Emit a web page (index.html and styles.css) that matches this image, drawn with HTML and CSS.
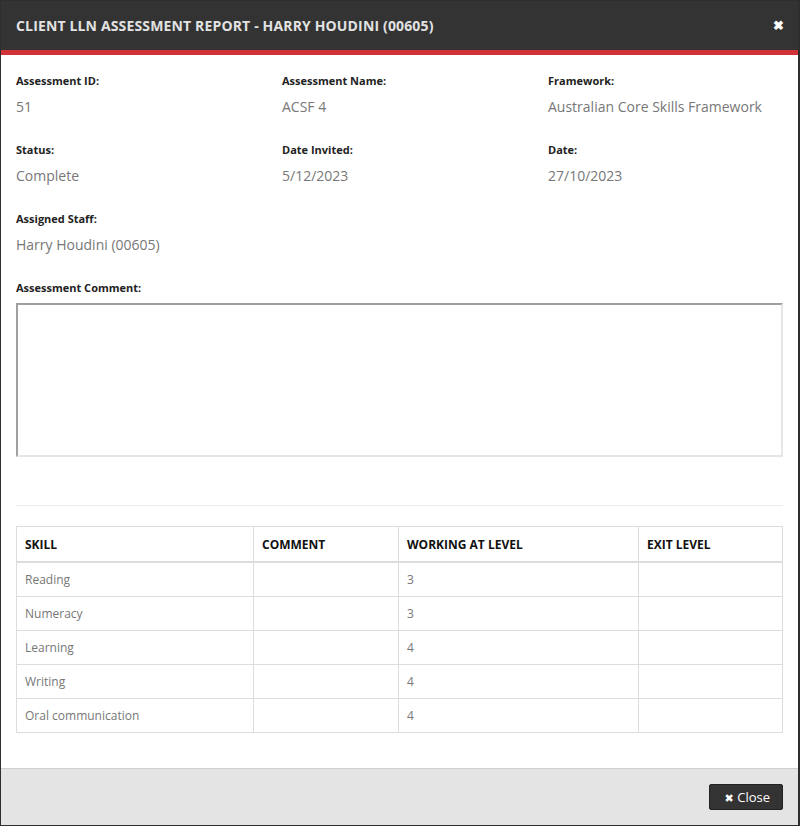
FILE: index.html
```html
<!DOCTYPE html>
<html lang="en">
<head>
  <meta charset="UTF-8" />
  <meta name="viewport" content="width=device-width, initial-scale=1.0">
  <title>Client LLN Assessment Report</title>
  <link rel="stylesheet" href="styles.css">
</head>
<body>

  <div class="modal">
    <div class="modal-header">
      <h1 class="modal-title">Client LLN Assessment Report - Harry Houdini (00605)</h1>
      <button class="close-x">&#10006;</button>
    </div>

    <div class="modal-body">
      <div class="details">
        <div class="field">
          <label>Assessment ID:</label>
          <p>51</p>
        </div>
        <div class="field">
          <label>Assessment Name:</label>
          <p>ACSF 4</p>
        </div>
        <div class="field">
          <label>Framework:</label>
          <p>Australian Core Skills Framework</p>
        </div>
        <div class="field">
          <label>Status:</label>
          <p>Complete</p>
        </div>
        <div class="field">
          <label>Date Invited:</label>
          <p>5/12/2023</p>
        </div>
        <div class="field">
          <label>Date:</label>
          <p>27/10/2023</p>
        </div>
        <div class="field">
          <label>Assigned Staff:</label>
          <p>Harry Houdini (00605)</p>
        </div>
      </div>

      <div class="field comment-field">
        <label>Assessment Comment:</label>
        <textarea class="comment-box"></textarea>
      </div>

      <hr class="divider">

      <!-- skill levels -->
      <table class="skills">
        <thead>
          <tr>
            <th class="col-skill">Skill</th>
            <th class="col-comment">Comment</th>
            <th class="col-working">Working At Level</th>
            <th>Exit Level</th>
          </tr>
        </thead>
        <tbody>
          <tr><td>Reading</td><td></td><td>3</td><td></td></tr>
          <tr><td>Numeracy</td><td></td><td>3</td><td></td></tr>
          <tr><td>Learning</td><td></td><td>4</td><td></td></tr>
          <tr><td>Writing</td><td></td><td>4</td><td></td></tr>
          <tr><td>Oral communication</td><td></td><td>4</td><td></td></tr>
        </tbody>
      </table>
    </div>

    <div class="modal-footer">
      <button class="btn-close"><span class="btn-icon">&#10006;</span> Close</button>
    </div>
  </div>

</body>
</html>
```

FILE: styles.css
```css
body, h1, p, label, button, table {
  margin: 0;
  padding: 0;
  box-sizing: border-box;
}

body {
  font-family: 'Open Sans', 'DejaVu Sans', sans-serif;
  background: #ffffff;
}

.modal {
  width: 800px;
  height: 826px;
  border: 1px solid #2e2e2e;
  border-right-width: 2px;
  box-sizing: border-box;
  display: flex;
  flex-direction: column;
  background: #ffffff;
}

.modal-header {
  height: 54px;
  background-color: #333333;
  border-bottom: 5px solid #d13238;
  box-sizing: border-box;
  display: flex;
  align-items: center;
  justify-content: space-between;
  padding: 0 14px 0 15px;
}

.modal-title {
  font-size: 14px;
  font-weight: 700;
  text-transform: uppercase;
  color: #e2e2e2;
  letter-spacing: 0.15px;
}

.close-x {
  background: none;
  border: none;
  color: #ffffff;
  font-size: 13px;
  font-weight: bold;
  cursor: pointer;
}

.modal-body {
  flex: 1;
  padding: 18px 15px 0 15px;
}

.details {
  display: grid;
  grid-template-columns: 266px 266px 1fr;
  row-gap: 24px;
}

.field label {
  display: block;
  font-size: 11px;
  font-weight: 700;
  color: #222222;
  line-height: 15px;
}

.field p {
  margin-top: 8px;
  font-size: 14px;
  color: #777777;
  line-height: 22px;
}

.comment-field {
  margin-top: 24px;
}

.comment-box {
  display: block;
  width: 100%;
  height: 154px;
  margin-top: 8px;
  box-sizing: border-box;
  border: 2px solid #e6e6e6;
  border-top-color: #a0a0a0;
  border-left-color: #a0a0a0;
  resize: none;
}

.divider {
  margin: 48px 0 20px 0;
  border: none;
  border-top: 1px solid #ececec;
}

.skills {
  width: 100%;
  border-collapse: collapse;
  table-layout: fixed;
  font-size: 12px;
}

.skills th,
.skills td {
  border: 1px solid #dddddd;
  text-align: left;
  padding: 0 8px;
}

.skills th {
  height: 34px;
  font-weight: 700;
  text-transform: uppercase;
  color: #111111;
  border-bottom-width: 2px;
}

.skills td {
  height: 33px;
  color: #777777;
}

.col-skill { width: 220px; }
.col-comment { width: 128px; }
.col-working { width: 223px; }

.modal-footer {
  height: 57px;
  background-color: #e4e4e4;
  border-top: 1px solid #cfcfcf;
  display: flex;
  align-items: center;
  justify-content: flex-end;
  padding: 0 15px;
  box-sizing: border-box;
}

.btn-close {
  background-color: #333333;
  color: #ffffff;
  border: 1px solid #222222;
  border-radius: 2px;
  font-family: inherit;
  font-size: 13px;
  height: 26px;
  padding: 0 12px 0 15px;
  cursor: pointer;
}

.btn-icon {
  font-size: 11px;
}
```
